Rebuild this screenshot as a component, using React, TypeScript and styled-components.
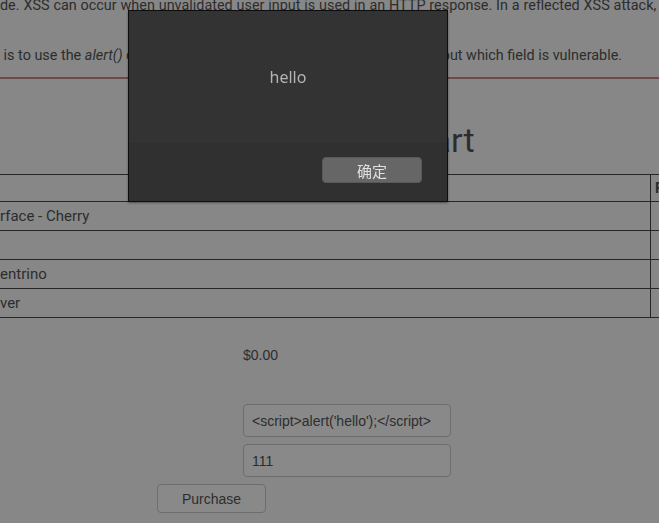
import styled, { createGlobalStyle } from 'styled-components'

const colors = {
  page: '#878787',
  text: '#2d2d2d',
  line: '#262626',
  rule: '#704848',
  field: '#898989',
  fieldBorder: '#6d6d6d',
  dialog: '#333333',
  dialogFooter: '#303030',
  dialogButton: '#666666',
}

const GlobalStyle = createGlobalStyle`
  html, body {
    margin: 0;
    padding: 0;
    background: ${colors.page};
    overflow: hidden;
  }
  body {
    font-family: Roboto, 'Liberation Sans', sans-serif;
    color: ${colors.text};
  }
`

const Page = styled.div`
  width: 659px;
  height: 523px;
  overflow: hidden;
`

const Intro = styled.div`
  margin-top: -4px;
  margin-left: -300px;
`

// the first line is a justified one, so its words sit a little further apart
const IntroLine = styled.p<{ $justified?: boolean }>`
  margin: 0 0 30px;
  font-size: 14.4px;
  line-height: 20px;
  white-space: nowrap;
  word-spacing: ${({ $justified }) => ($justified ? '0.3px' : 'normal')};

  &:last-child {
    margin-bottom: 0;
  }
`

// the start of a line that lies left of the scrolled viewport
const Lead = styled.span<{ $width: number }>`
  display: inline-block;
  width: ${({ $width }) => $width}px;
  overflow: hidden;
  text-align: right;
  vertical-align: top;
  white-space: nowrap;
`

const Rule = styled.hr`
  margin: 11px 0 0;
  border: 0;
  border-top: 2px solid ${colors.rule};
`

const Heading = styled.h1`
  width: 734px;
  margin: 41px 0 14px;
  font-size: 34px;
  line-height: 40px;
  font-weight: 400;
  text-align: center;
`

const Cart = styled.table`
  table-layout: fixed;
  width: 1000px;
  margin-left: -45px;
  border-collapse: collapse;
  font-size: 15px;
`

const Cell = styled.td<{ $head?: boolean; $align?: 'left' | 'center' }>`
  border: 1px solid ${colors.line};
  height: ${({ $head }) => ($head ? 26 : 28)}px;
  padding: 0 4px;
  font-weight: ${({ $head }) => ($head ? 700 : 400)};
  text-align: ${({ $align }) => $align ?? 'left'};
  vertical-align: middle;
  white-space: nowrap;
  overflow: hidden;

  &:first-child {
    width: 686px;
  }
`

const Checkout = styled.form`
  display: grid;
  grid-template-columns: 243px 208px;
  row-gap: 7px;
  margin-top: 29px;
  font-family: 'Liberation Sans', Arial, sans-serif;
  font-size: 14px;
`

const Total = styled.div`
  grid-column: 2;
  line-height: 16px;
  margin-bottom: 34px;
`

const Field = styled.input`
  grid-column: 2;
  box-sizing: border-box;
  height: 33px;
  padding: 0 8px;
  border: 1px solid ${colors.fieldBorder};
  border-radius: 4px;
  background: ${colors.field};
  color: ${colors.text};
  font: inherit;
  outline: none;
`

const PurchaseButton = styled.button`
  grid-column: 1 / span 2;
  justify-self: start;
  margin-left: 157px;
  box-sizing: border-box;
  width: 109px;
  height: 29px;
  border: 1px solid ${colors.fieldBorder};
  border-radius: 4px;
  background: ${colors.field};
  color: ${colors.text};
  font: inherit;
`

const Dialog = styled.div`
  position: fixed;
  left: 128px;
  top: 10px;
  box-sizing: border-box;
  width: 320px;
  height: 192px;
  display: flex;
  flex-direction: column;
  background: ${colors.dialog};
  border: 1px solid #0d0d0d;
  box-shadow: 0 1px 2px rgba(0, 0, 0, 0.4);
`

const DialogMessage = styled.div`
  flex: 1;
  display: flex;
  align-items: center;
  justify-content: center;
  color: #b4b4b4;
  font-family: 'Noto Sans', sans-serif;
  font-size: 16px;
`

const DialogFooter = styled.div`
  height: 58px;
  display: flex;
  justify-content: flex-end;
  align-items: flex-start;
  padding: 14px 25px 0 0;
  box-sizing: border-box;
  background: ${colors.dialogFooter};
`

const DialogButton = styled.button`
  width: 100px;
  height: 26px;
  border: 1px solid #595959;
  border-radius: 4px;
  background: ${colors.dialogButton};
  color: #e0e0e0;
  font-family: 'Noto Sans', 'Noto Sans CJK SC', sans-serif;
  font-size: 15px;
  padding: 0;
`

// product names, split where the scrolled viewport cuts them
const rows = [
  { lead: 'Su', rest: 'rface - Cherry' },
  { lead: 'iPad', rest: '' },
  { lead: 'C', rest: 'entrino' },
  { lead: 'Sil', rest: 'ver' },
]

export default function App () {
  return (
    <Page>
      <GlobalStyle />
      <Intro>
        <IntroLine $justified>
          <Lead $width={300}>allows an attacker to run malicious client-side co</Lead>
          de. XSS can occur when unvalidated user input is used in an HTTP response. In a reflected XSS attack, an attacker can trick a user into sending a request.
        </IntroLine>
        <IntroLine>
          <Lead $width={300}>The easiest way to find a reflected XSS</Lead>
          {' '}is to use the <i>alert()</i> command, which pops up a dialog that tells us about which field is vulnerable.
        </IntroLine>
      </Intro>
      <Rule />
      <Heading>Shopping Cart</Heading>
      <Cart>
        <tbody>
          <tr>
            <Cell $head $align='center'>Product</Cell>
            <Cell $head>Price</Cell>
          </tr>
          {rows.map((row) => (
            <tr key={row.lead}>
              <Cell>
                <Lead $width={40}>{row.lead}</Lead>
                {row.rest}
              </Cell>
              <Cell />
            </tr>
          ))}
        </tbody>
      </Cart>
      <Checkout onSubmit={(e) => e.preventDefault()}>
        <Total>$0.00</Total>
        <Field defaultValue="<script>alert('hello');</script>" />
        <Field defaultValue='111' />
        <PurchaseButton type='button'>Purchase</PurchaseButton>
      </Checkout>
      <Dialog>
        <DialogMessage>hello</DialogMessage>
        <DialogFooter>
          <DialogButton>确定</DialogButton>
        </DialogFooter>
      </Dialog>
    </Page>
  )
}
